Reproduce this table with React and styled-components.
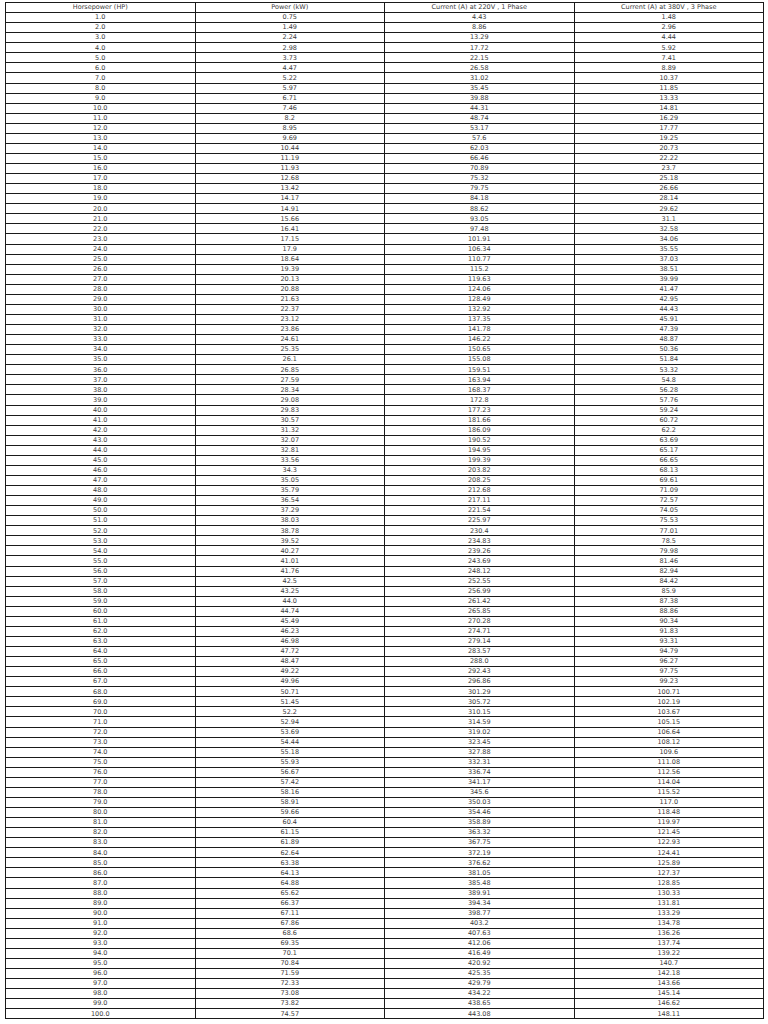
import React from "react";
import styled, { createGlobalStyle } from "styled-components";

const GlobalStyle = createGlobalStyle`
  html, body {
    margin: 0;
    padding: 0;
    background: #ffffff;
  }
`;

const Page = styled.div`
  padding: 2px 4px 0 5px;
`;

const Table = styled.table`
  width: 759px;
  border-collapse: collapse;
  table-layout: fixed;
  font-family: "DejaVu Sans", "Liberation Sans", sans-serif;
  font-size: 6.5px;
  color: #3c3c3c;
  border: 1px solid #111;
`;

const Row = styled.tr`
  height: 10.07px;
`;

const Cell = styled.td`
  border: 1px solid #1a1a1a;
  padding: 0;
  line-height: 1;
  text-align: center;
  vertical-align: middle;
  white-space: nowrap;
`;

const HeadCell = styled(Cell).attrs({ as: "th" })`
  font-weight: normal;
`;

// python-like str(round(x, 2))
const fmt = (x) => {
  const v = Number(x.toFixed(2));
  return Number.isInteger(v) ? v.toFixed(1) : String(v);
};

const rows = Array.from({ length: 100 }, (_, i) => {
  const hp = i + 1;
  const kw = hp * 0.7457;
  const w = hp * 745.7;
  return [
    hp.toFixed(1),
    fmt(kw),
    fmt(w / (220 * 0.85 * 0.9)),
    fmt(w / (1.732 * 380 * 0.85 * 0.9)),
  ];
});

const headers = [
  "Horsepower (HP)",
  "Power (kW)",
  "Current (A) at 220V , 1 Phase",
  "Current (A) at 380V , 3 Phase",
];

export default function App() {
  return (
    <Page>
      <GlobalStyle />
      <Table>
        <thead>
          <Row>
            {headers.map((h) => (
              <HeadCell key={h}>{h}</HeadCell>
            ))}
          </Row>
        </thead>
        <tbody>
          {rows.map((r) => (
            <Row key={r[0]}>
              {r.map((v, j) => (
                <Cell key={j}>{v}</Cell>
              ))}
            </Row>
          ))}
        </tbody>
      </Table>
    </Page>
  );
}
